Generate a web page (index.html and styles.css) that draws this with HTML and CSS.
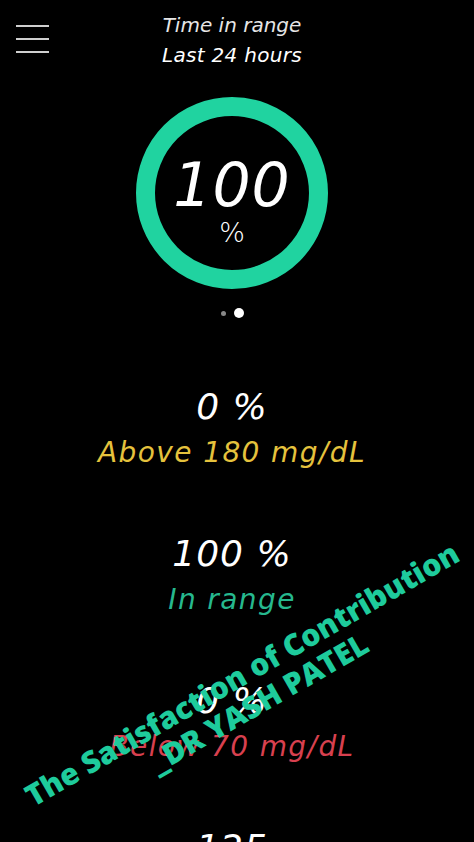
FILE: index.html
```html
<!DOCTYPE html>
<html lang="en">
<head>
    <meta charset="UTF-8">
    <meta name="viewport" content="width=device-width, initial-scale=1.0">
    <title>Time in range</title>
    <link rel="stylesheet" href="styles.css">
</head>
<body>
    <div class="screen">
        <header class="top-bar">
            <button class="menu-btn" aria-label="Menu">
                <span></span><span></span><span></span>
            </button>
            <div class="title">
                <div class="title-main">Time in range</div>
                <div class="title-sub">Last 24 hours</div>
            </div>
        </header>

        <div class="ring">
            <div class="ring-value">100</div>
            <div class="ring-unit">%</div>
        </div>

        <div class="pager">
            <span class="dot"></span>
            <span class="dot active"></span>
        </div>

        <section class="stats">
            <div class="stat">
                <div class="stat-value">0 %</div>
                <div class="stat-label above">Above 180 mg/dL</div>
            </div>
            <div class="stat">
                <div class="stat-value">100 %</div>
                <div class="stat-label in-range">In range</div>
            </div>
            <div class="stat">
                <div class="stat-value">0 %</div>
                <div class="stat-label below">Below 70 mg/dL</div>
            </div>
            <div class="stat">
                <div class="stat-value">125</div>
            </div>
        </section>

        <div class="watermark">
            <div>The Satisfaction of Contribution</div>
            <div>_DR YASH PATEL</div>
        </div>
    </div>
</body>
</html>
```

FILE: styles.css
```css
body {
    margin: 0;
    background-color: #000;
    color: #fff;
    font-family: 'DejaVu Sans', sans-serif;
    font-style: oblique;
    font-weight: 200;
}
.screen {
    position: relative;
    box-sizing: border-box;
    height: 842px;
    padding-right: 10px;
    overflow: hidden;
}
.top-bar {
    position: relative;
    padding-top: 10px;
}
.menu-btn {
    position: absolute;
    left: 16px;
    top: 25px;
    display: flex;
    flex-direction: column;
    gap: 11px;
    padding: 0;
    background: none;
    border: none;
}
.menu-btn span {
    display: block;
    width: 33px;
    height: 2px;
    background-color: #cfcfcf;
}
.title {
    text-align: center;
}
.title-main {
    font-size: 20px;
    line-height: 30px;
    color: #e6e6e6;
}
.title-sub {
    font-size: 20px;
    line-height: 30px;
    font-weight: 400;
    letter-spacing: 0.3px;
}
.ring {
    box-sizing: border-box;
    width: 192px;
    height: 192px;
    margin: 27px auto 0;
    padding-top: 18px;
    border: 19px solid #20d3a0;
    border-radius: 50%;
    display: flex;
    flex-direction: column;
    align-items: center;
    justify-content: center;
}
.ring-value {
    font-size: 60px;
    line-height: 62px;
    letter-spacing: 1px;
}
.ring-unit {
    font-size: 27px;
    line-height: 34px;
    font-style: normal;
}
.pager {
    display: flex;
    justify-content: center;
    align-items: center;
    gap: 8px;
    height: 10px;
    margin-top: 19px;
}
.dot {
    width: 5px;
    height: 5px;
    border-radius: 50%;
    background-color: #888;
}
.dot.active {
    width: 10px;
    height: 10px;
    background-color: #fff;
}
.stats {
    display: flex;
    flex-direction: column;
    gap: 55px;
    margin-top: 66px;
    text-align: center;
}
.stat-value {
    font-size: 36px;
    line-height: 46px;
    letter-spacing: 1px;
}
.stat-label {
    font-size: 28px;
    line-height: 46px;
    letter-spacing: 1.4px;
}
.above {
    color: #e5c23d;
}
.in-range {
    color: #26b88e;
}
.below {
    color: #d8404f;
}
.watermark {
    position: absolute;
    left: 250px;
    top: 688px;
    transform: translate(-50%, -50%) rotate(-30deg);
    font-family: 'Open Sans', sans-serif;
    font-style: normal;
    font-weight: 800;
    font-size: 30px;
    line-height: 33px;
    color: #1ecb9c;
    text-align: center;
    white-space: nowrap;
}
```
